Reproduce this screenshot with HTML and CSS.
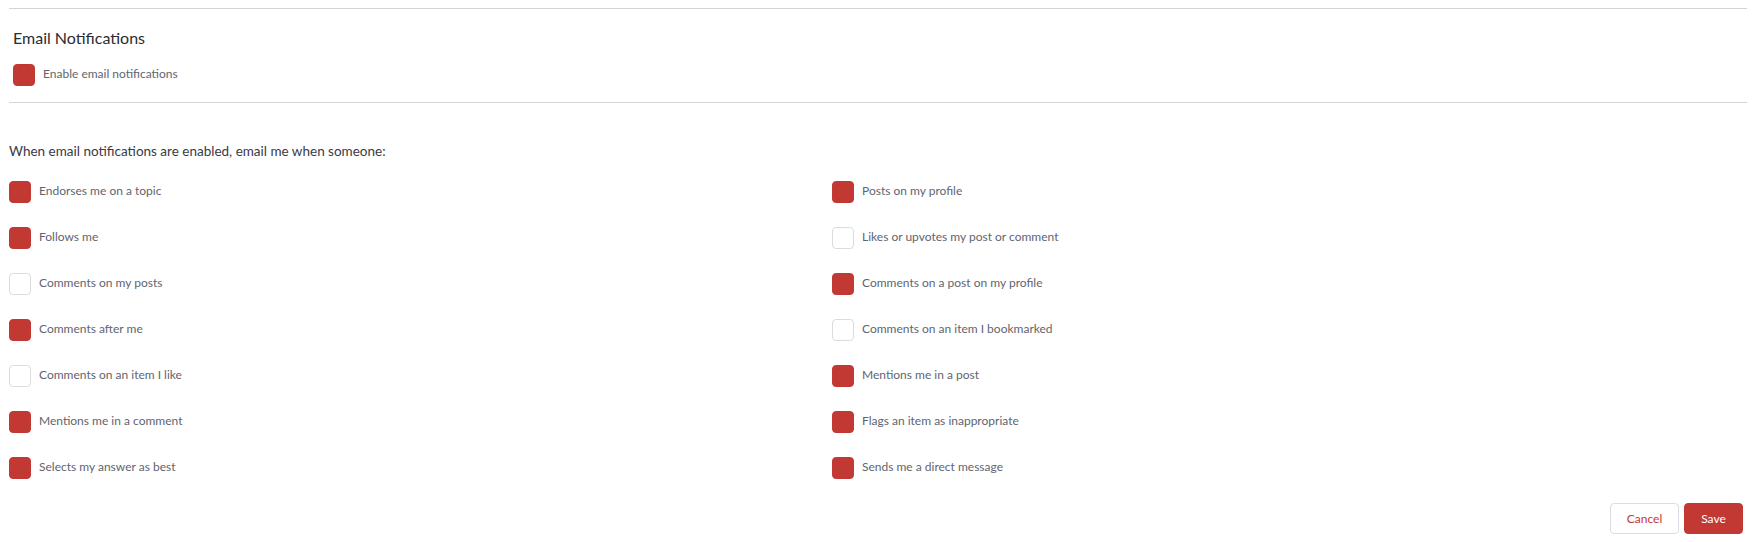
FILE: index.html
```html
<!DOCTYPE html>
<html>
<head>
<meta charset="utf-8">
<link rel="stylesheet" href="styles.css">
</head>
<body>
<div class="page">
  <hr class="rule">
  <section class="master">
    <h2 class="title">Email Notifications</h2>
    <label class="opt"><span class="box on"></span><span class="lbl">Enable email notifications</span></label>
  </section>
  <hr class="rule">
  <p class="intro">When email notifications are enabled, email me when someone:</p>
  <div class="grid">
    <label class="opt"><span class="box on"></span><span class="lbl">Endorses me on a topic</span></label>
    <label class="opt"><span class="box on"></span><span class="lbl">Posts on my profile</span></label>
    <label class="opt"><span class="box on"></span><span class="lbl">Follows me</span></label>
    <label class="opt"><span class="box"></span><span class="lbl">Likes or upvotes my post or comment</span></label>
    <label class="opt"><span class="box"></span><span class="lbl">Comments on my posts</span></label>
    <label class="opt"><span class="box on"></span><span class="lbl">Comments on a post on my profile</span></label>
    <label class="opt"><span class="box on"></span><span class="lbl">Comments after me</span></label>
    <label class="opt"><span class="box"></span><span class="lbl">Comments on an item I bookmarked</span></label>
    <label class="opt"><span class="box"></span><span class="lbl">Comments on an item I like</span></label>
    <label class="opt"><span class="box on"></span><span class="lbl">Mentions me in a post</span></label>
    <label class="opt"><span class="box on"></span><span class="lbl">Mentions me in a comment</span></label>
    <label class="opt"><span class="box on"></span><span class="lbl">Flags an item as inappropriate</span></label>
    <label class="opt"><span class="box on"></span><span class="lbl">Selects my answer as best</span></label>
    <label class="opt"><span class="box on"></span><span class="lbl">Sends me a direct message</span></label>
  </div>
  <div class="actions">
    <button class="btn cancel">Cancel</button>
    <button class="btn save">Save</button>
  </div>
</div>
</body>
</html>
```
FILE: styles.css
```css
html, body {
  margin: 0;
  padding: 0;
  background: #ffffff;
}
body {
  font-family: Lato, "Open Sans", Arial, sans-serif;
  color: #333333;
}
.page {
  padding: 8px 10px 0 9px;
}
.rule {
  margin: 0;
  border: 0;
  border-top: 1px solid #d4d4d4;
  height: 0;
}
.master {
  padding: 19px 0 16px 4px;
}
.title {
  margin: 0 0 16px 0;
  font-size: 16px;
  font-weight: 400;
  line-height: 20px;
  color: #2b2b33;
}
.opt {
  display: flex;
  align-items: center;
  gap: 8px;
  height: 22px;
}
.box {
  width: 22px;
  height: 22px;
  box-sizing: border-box;
  border-radius: 4px;
  border: 1px solid #d8dde0;
  background: #ffffff;
  flex: none;
}
.box.on {
  background: #c23934;
  border-color: #c23934;
}
.lbl {
  font-size: 12px;
  line-height: 16px;
  padding-bottom: 2px;
  color: #5f6570;
}
.intro {
  margin: 39px 0 0 0;
  font-size: 13.5px;
  line-height: 18px;
  color: #3a3a44;
}
.grid {
  margin-top: 21px;
  display: grid;
  grid-template-columns: 823px 1fr;
  row-gap: 24px;
}
.actions {
  margin-top: 24px;
  display: flex;
  justify-content: flex-end;
  gap: 5px;
  padding-right: 4px;
}
.btn {
  height: 31px;
  border-radius: 4px;
  font-family: Lato, "Open Sans", Arial, sans-serif;
  font-size: 12px;
  padding: 0;
}
.cancel {
  width: 69px;
  background: #ffffff;
  border: 1px solid #d8dde6;
  color: #c23934;
}
.save {
  width: 59px;
  background: #c23934;
  border: 1px solid #c23934;
  color: #ffffff;
}
```
